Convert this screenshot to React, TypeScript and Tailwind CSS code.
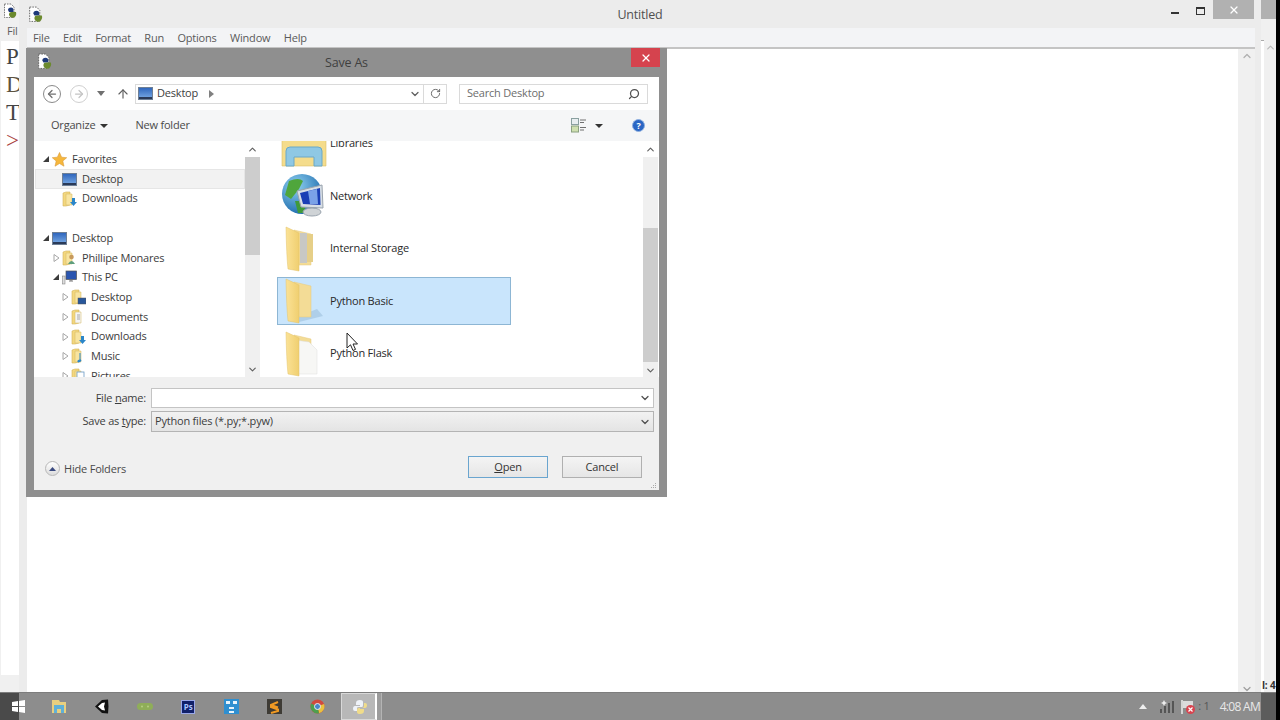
import { ArrowLeft, ArrowRight, ArrowUp, ChevronDown, ChevronUp, RotateCw, Search, X } from 'lucide-react';

const uiFont = "[font-family:'Open_Sans','Noto_Sans',sans-serif] tracking-[-0.2px]";

const Tri = ({ open }: { open: boolean }) => (
  <svg width="10" height="10" viewBox="0 0 10 10" className="shrink-0">
    {open ? <path d="M2 8 L8 8 L8 2 Z" fill="#3c3c3c" /> : <path d="M3 1.5 L8 5 L3 8.5 Z" fill="#fff" stroke="#a6a6a6" />}
  </svg>
);

const PyDoc = ({ size = 16 }: { size?: number }) => (
  <svg width={size} height={size} viewBox="0 0 16 16" className="shrink-0">
    <path d="M2.5 1 H9 L12 4 V14.5 H2.5 Z" fill="#fff" stroke="#555" strokeDasharray="1.5 1" strokeWidth="0.8" />
    <path d="M6 7 Q6 4.5 9 4.5 Q11.5 4.5 11.5 7 V9 H7 Z" fill="#1f3a7a" />
    <path d="M7 11 Q7 9 9.5 9 H14 Q15 12.5 12 14.5 Q8 15.5 7 12 Z" fill="#6c8a2e" />
  </svg>
);

const SmallFolder = ({ kind }: { kind: string }) => (
  <svg width="15" height="16" viewBox="0 0 15 16" className="shrink-0">
    <path d="M1 2 L4 1 H8 V14 L4 15 H1 Z" fill="#f3d77f" stroke="#d3b45c" strokeWidth="0.6" />
    <path d="M4 3 H10 V14 H4 Z" fill={kind === 'doc' ? '#f5f5f5' : '#f8e4a0'} stroke="#d3b45c" strokeWidth="0.5" />
    {kind === 'down' && <path d="M10 7 H13 V11 H15 L11.5 15 L8 11 H10 Z" fill="#2b86c9" />}
    {kind === 'desk' && <rect x="7" y="9" width="8" height="6" fill="#28579b" stroke="#555" strokeWidth="0.5" />}
    {kind === 'doc' && <path d="M6 6 H9 M6 8 H9 M6 10 H9" stroke="#888" strokeWidth="0.7" />}
    {kind === 'music' && <path d="M9 5 V12 M9 12 Q6 12 7 14 Q10 14 10 12 Z" stroke="#2b86c9" fill="#2b86c9" />}
    {kind === 'user' && <><circle cx="9.5" cy="7" r="2.3" fill="#c79a5c" /><path d="M6 14 Q9.5 8 13 14 Z" fill="#5e9e7d" /></>}
    {kind === 'pic' && <rect x="6" y="4" width="7" height="9" fill="#fff" stroke="#6a9ac4" strokeWidth="0.8" />}
  </svg>
);

const Monitor = () => (
  <svg width="15" height="13" viewBox="0 0 15 13" className="shrink-0">
    <defs>
      <linearGradient id="deskGrad" x1="0" y1="0" x2="0" y2="1">
        <stop offset="0" stopColor="#2c63bb" />
        <stop offset="1" stopColor="#7fb0e8" />
      </linearGradient>
    </defs>
    <rect x="0.5" y="0.5" width="14" height="12" fill="url(#deskGrad)" stroke="#6e7f95" />
    <rect x="1" y="10" width="13" height="2" fill="#2a3a58" />
  </svg>
);

const Star = () => (
  <svg width="15" height="15" viewBox="0 0 15 15" className="shrink-0">
    <path d="M7.5 0.5 L9.6 5.2 L14.7 5.7 L10.8 9 L12 14.2 L7.5 11.5 L3 14.2 L4.2 9 L0.3 5.7 L5.4 5.2 Z" fill="#f6b73c" stroke="#d99a3a" strokeWidth="0.6" />
  </svg>
);

const PcIcon = () => (
  <svg width="15" height="15" viewBox="0 0 15 15" className="shrink-0">
    <rect x="0.5" y="6" width="2.5" height="8" fill="#ddd" stroke="#777" strokeWidth="0.5" />
    <rect x="4" y="1" width="10.5" height="8.5" fill="#2a55b0" stroke="#555" strokeWidth="0.7" />
    <path d="M7 11 H11 M9 9.5 V11" stroke="#777" />
  </svg>
);

const LargeFolder = ({ kind }: { kind: string }) => (
  <svg width="46" height="48" viewBox="0 0 46 48" className="shrink-0">
    <defs>
      <linearGradient id={`fold-${kind}`} x1="0" y1="0" x2="1" y2="0">
        <stop offset="0" stopColor="#fbe296" />
        <stop offset="1" stopColor="#f0cf70" />
      </linearGradient>
    </defs>
    {kind === 'basic' && <path d="M16 40 L36 32 L42 39 L18 45 Z" fill="#a9c9e4" opacity="0.8" />}
    <path d="M13 5 L30 9 V40 H13 Z" fill="#f3dc96" stroke="#e6cb7e" strokeWidth="0.5" />
    {kind === 'storage' && <path d="M19 8 H26 V38 H19 Z" fill="#c8c8c4" />}
    {kind === 'storage' && <path d="M26 9 H32 V37 H26 Z" fill="#e6cf88" />}
    {kind === 'flask' && <path d="M14 10 L28 12 L36 20 V44 H14 Z" fill="#f7f7f5" stroke="#ddd" strokeWidth="0.5" />}
    <path d="M5 2 L18 8 V46 L7 44 Q5.5 30 5 2 Z" fill={`url(#fold-${kind})`} stroke="#e2c26a" strokeWidth="0.5" />
  </svg>
);

const LibraryIcon = () => (
  <svg width="46" height="48" viewBox="0 0 46 48" className="shrink-0">
    <path d="M1 6 H45 V46 H1 Z" fill="#f4dc8c" stroke="#dcc06a" strokeWidth="0.6" />
    <path d="M5 31 Q5 27 9 27 H37 Q41 27 41 31 V46 H33 V37 H13 V46 H5 Z" fill="#8fc8e4" stroke="#6aa8c8" />
  </svg>
);

const NetworkIcon = () => (
  <svg width="46" height="46" viewBox="0 0 46 46" className="shrink-0">
    <defs>
      <radialGradient id="globeGrad" cx="0.35" cy="0.3" r="0.8">
        <stop offset="0" stopColor="#8fd0f0" />
        <stop offset="1" stopColor="#1463a8" />
      </radialGradient>
    </defs>
    <circle cx="21" cy="21" r="20" fill="url(#globeGrad)" />
    <path d="M8 8 Q18 4 22 8 L18 16 L10 26 L4 22 Z" fill="#4fa63c" />
    <path d="M14 28 L24 28 L24 40 L17 40 Z" fill="#3f9a3a" />
    <path d="M16 18 L41 12 L42 35 L20 34 Z" fill="#d8dfe6" stroke="#9aa4ae" />
    <path d="M19 20 L39 15 L39.5 32 L22 31 Z" fill="#1a3fb5" />
    <path d="M27 18 L36 16 L37 31 L29 31 Z" fill="#7aa2e8" />
    <ellipse cx="31" cy="39" rx="9" ry="4" fill="#cfd3d6" stroke="#9aa4ae" />
  </svg>
);

const Cursor = () => (
  <svg width="13" height="20" viewBox="0 0 13 20">
    <path d="M1 1 V16 L4.5 12.8 L7 18.5 L9.5 17.4 L7 12 L11.5 12 Z" fill="#fff" stroke="#222" strokeWidth="1" />
  </svg>
);

const treeIndent = ['pl-[6px]', 'pl-[16px]', 'pl-[25px]'];

const TreeRow = ({ level, arrow, icon, label, active }: { level: number; arrow?: 'open' | 'closed'; icon: React.ReactNode; label: string; active?: boolean }) => (
  <div className={`flex items-center h-[19.7px] shrink-0 ${treeIndent[level]} ${active ? 'bg-[#f2f2f2] outline outline-1 -outline-offset-1 outline-[#e6e6e6]' : ''}`}>
    <span className="w-[10px] mr-[1px] shrink-0">{arrow && <Tri open={arrow === 'open'} />}</span>
    <span className="w-[15px] mr-[5px] shrink-0 flex justify-center">{icon}</span>
    <span className="text-[11px] text-[#3c3c3c] whitespace-nowrap">{label}</span>
  </div>
);

const FileItem = ({ icon, label, selected }: { icon: React.ReactNode; label: string; selected?: boolean }) => (
  <div className={`flex items-center w-[234px] h-[48px] shrink-0 pl-[3px] border ${selected ? 'bg-[#c9e5fc] border-[#8db6d4]' : 'border-transparent'}`}>
    <span className="w-[46px] mr-[3px] flex justify-center shrink-0">{icon}</span>
    <span className="text-[11px] text-[#2a2a2a] whitespace-nowrap">{label}</span>
  </div>
);

const VScroll = ({ thumbTop, thumbHeight }: { thumbTop: string; thumbHeight: string }) => (
  <div className="w-[15px] shrink-0 bg-[#f0f0f0] flex flex-col h-full">
    <div className="h-[16px] flex items-center justify-center shrink-0 bg-white">
      <ChevronUp size={11} strokeWidth={2.5} className="text-[#606060]" />
    </div>
    <div className="flex-1 flex flex-col">
      <div className={thumbTop} />
      <div className={`${thumbHeight} bg-[#cdcdcd]`} />
    </div>
    <div className="h-[16px] flex items-center justify-center shrink-0">
      <ChevronDown size={11} strokeWidth={2.5} className="text-[#606060]" />
    </div>
  </div>
);

const SaveAsDialog = () => (
  <div className={`absolute left-[26px] top-[48px] w-[641px] h-[449px] bg-[#8f8f8f] flex flex-col ${uiFont}`}>
    <div className="h-[29px] shrink-0 relative flex items-center justify-center">
      <span className="absolute left-[10px] top-[5px]"><PyDoc size={17} /></span>
      <span className="text-[12.5px] text-[#3f3f3f] translate-y-[1px]">Save As</span>
      <div className="absolute right-[7px] top-0 w-[29px] h-[19px] bg-[#d5434e] flex items-center justify-center">
        <X size={12} strokeWidth={2.5} className="text-white" />
      </div>
    </div>
    <div className="flex-1 ml-[8px] mr-[8px] mb-[7px] bg-[#f0f0f0] flex flex-col min-h-0">
      {/* nav bar */}
      <div className="h-[33px] shrink-0 bg-white flex items-center pl-[9px]">
        <span className="w-[18px] h-[18px] rounded-full border border-[#8a8a8a] flex items-center justify-center">
          <ArrowLeft size={12} strokeWidth={2.5} className="text-[#707070]" />
        </span>
        <span className="ml-[9px] w-[18px] h-[18px] rounded-full border border-[#d0d0d0] flex items-center justify-center">
          <ArrowRight size={12} strokeWidth={2.5} className="text-[#c4c4c4]" />
        </span>
        <svg width="8" height="5" viewBox="0 0 8 5" className="ml-[9px]"><path d="M0 0 H8 L4 5 Z" fill="#707070" /></svg>
        <ArrowUp size={14} strokeWidth={2} className="ml-[11px] text-[#606060]" />
        <div className="ml-[5px] w-[312px] h-[20px] border border-[#dadada] flex items-center">
          <span className="ml-[2px]"><Monitor /></span>
          <span className="ml-[4px] text-[11px] text-[#404040]">Desktop</span>
          <svg width="5" height="8" viewBox="0 0 5 8" className="ml-[11px]"><path d="M0 0 L5 4 L0 8 Z" fill="#808080" /></svg>
          <span className="ml-auto flex items-center h-full">
            <ChevronDown size={12} strokeWidth={2.5} className="text-[#606060] mr-[2px]" />
            <span className="w-[23px] h-full border-l border-[#dadada] flex items-center justify-center">
              <RotateCw size={11} strokeWidth={2} className="text-[#606060]" />
            </span>
          </span>
        </div>
        <div className="ml-[12px] w-[189px] h-[20px] border border-[#dadada] flex items-center justify-between px-[7px]">
          <span className="text-[11px] text-[#6d6d6d]">Search Desktop</span>
          <Search size={12} strokeWidth={2.5} className="text-[#505050] -scale-x-100" />
        </div>
      </div>
      {/* toolbar */}
      <div className="h-[31px] shrink-0 bg-[#f5f6f7] flex items-center pl-[17px] pr-[14px]">
        <span className="text-[11px] text-[#4a4a4a]">Organize</span>
        <svg width="8" height="4" viewBox="0 0 8 4" className="ml-[5px]"><path d="M0 0 H8 L4 4 Z" fill="#333" /></svg>
        <span className="ml-[27px] text-[11px] text-[#4a4a4a]">New folder</span>
        <span className="ml-auto flex items-center">
          <svg width="16" height="15" viewBox="0 0 16 15">
            <rect x="0.5" y="0.5" width="7" height="6" fill="#e8eef0" stroke="#8aa0a0" />
            <rect x="0.5" y="8" width="7" height="6" fill="#cfe0b0" stroke="#8aa080" />
            <path d="M9 2 H15 M9 4.5 H13 M9 9.5 H15 M9 12 H13" stroke="#707070" />
          </svg>
          <svg width="8" height="4" viewBox="0 0 8 4" className="ml-[8px]"><path d="M0 0 H8 L4 4 Z" fill="#333" /></svg>
          <span className="ml-[29px] w-[13px] h-[13px] rounded-full bg-[#2a66c4] border border-[#8fb0e0] text-white text-[9px] font-bold flex items-center justify-center leading-none">?</span>
        </span>
      </div>
      {/* panes */}
      <div className="h-[236px] shrink-0 bg-white flex">
        <div className="w-[211px] shrink-0 overflow-hidden flex flex-col pt-[8.5px] pl-[1px]">
          <TreeRow level={0} arrow="open" icon={<Star />} label="Favorites" />
          <TreeRow level={1} icon={<Monitor />} label="Desktop" active />
          <TreeRow level={1} icon={<SmallFolder kind="down" />} label="Downloads" />
          <div className="h-[19.7px] shrink-0" />
          <TreeRow level={0} arrow="open" icon={<Monitor />} label="Desktop" />
          <TreeRow level={1} arrow="closed" icon={<SmallFolder kind="user" />} label="Phillipe Monares" />
          <TreeRow level={1} arrow="open" icon={<PcIcon />} label="This PC" />
          <TreeRow level={2} arrow="closed" icon={<SmallFolder kind="desk" />} label="Desktop" />
          <TreeRow level={2} arrow="closed" icon={<SmallFolder kind="doc" />} label="Documents" />
          <TreeRow level={2} arrow="closed" icon={<SmallFolder kind="down" />} label="Downloads" />
          <TreeRow level={2} arrow="closed" icon={<SmallFolder kind="music" />} label="Music" />
          <TreeRow level={2} arrow="closed" icon={<SmallFolder kind="pic" />} label="Pictures" />
        </div>
        <VScroll thumbTop="h-0" thumbHeight="h-[98px]" />
        <div className="w-[2px] shrink-0" />
        <div className="flex-1 overflow-hidden pl-[15px] flex flex-col gap-[4.5px]">
          <div className="-mt-[21.5px]"><FileItem icon={<LibraryIcon />} label="Libraries" /></div>
          <FileItem icon={<NetworkIcon />} label="Network" />
          <FileItem icon={<LargeFolder kind="storage" />} label="Internal Storage" />
          <FileItem icon={<LargeFolder kind="basic" />} label="Python Basic" selected />
          <FileItem icon={<LargeFolder kind="flask" />} label="Python Flask" />
        </div>
        <VScroll thumbTop="h-[71px]" thumbHeight="h-[134px]" />
        <div className="w-[1px] shrink-0" />
      </div>
      {/* file name and type */}
      <div className="flex-1 flex flex-col pt-[11px] pr-[5px] relative">
        <div className="flex items-center h-[20px]">
          <span className="w-[112px] text-right text-[11px] text-[#3c3c3c]">File <u>n</u>ame:</span>
          <div className="ml-[5px] flex-1 h-full bg-white border border-[#c4c4c4] flex items-center justify-end pr-[2px]">
            <ChevronDown size={12} strokeWidth={2.5} className="text-[#505050]" />
          </div>
        </div>
        <div className="flex items-center h-[21px] mt-[3px]">
          <span className="w-[112px] text-right text-[11px] text-[#3c3c3c]">Save as <u>t</u>ype:</span>
          <div className="ml-[5px] flex-1 h-full bg-gradient-to-b from-[#f2f2f2] to-[#e4e4e4] border border-[#b4b4b4] flex items-center justify-between pl-[3px] pr-[2px]">
            <span className="text-[11px] text-[#3c3c3c]">Python files (*.py;*.pyw)</span>
            <ChevronDown size={12} strokeWidth={2.5} className="text-[#505050]" />
          </div>
        </div>
        <div className="flex items-center mt-[24px] pl-[11px] pr-[12px]">
          <span className="mt-[3px] w-[15px] h-[15px] rounded-full border border-[#b8b8b8] bg-gradient-to-b from-white to-[#dcdcdc] flex items-center justify-center">
            <svg width="7" height="4" viewBox="0 0 7 4"><path d="M0 4 L3.5 0 L7 4 Z" fill="#3a4a80" /></svg>
          </span>
          <span className="mt-[4px] ml-[4px] text-[11px] text-[#4a4a4a]">Hide Folders</span>
          <div className="ml-auto w-[80px] h-[22px] border border-[#6aa5cf] bg-gradient-to-b from-[#f4f4f4] to-[#e6e6e6] flex items-center justify-center text-[11px] text-[#333]">
            <span><u>O</u>pen</span>
          </div>
          <div className="ml-[14px] w-[80px] h-[22px] border border-[#b0b0b0] bg-gradient-to-b from-[#f4f4f4] to-[#e6e6e6] flex items-center justify-center text-[11px] text-[#333]">
            Cancel
          </div>
        </div>
        <svg width="7" height="7" viewBox="0 0 7 7" className="absolute right-[2px] bottom-[1px]">
          <path d="M5 1 h1 v1 h-1z M3 3 h1 v1 h-1z M5 3 h1 v1 h-1z M1 5 h1 v1 h-1z M3 5 h1 v1 h-1z M5 5 h1 v1 h-1z" fill="#a8a8a8" />
        </svg>
      </div>
    </div>
  </div>
);

const TrayIcon = ({ children }: { children: React.ReactNode }) => (
  <span className="w-[43.2px] flex justify-center shrink-0">{children}</span>
);

const Taskbar = () => (
  <div className={`h-[28px] shrink-0 flex items-center border-t border-[#7d7d7d] bg-[linear-gradient(90deg,#4a4a4a_19px,#8d8d8d_19px,#8d8d8d_1261px,#5c5c5c_1261px)] ${uiFont}`}>
    <svg width="13" height="13" viewBox="0 0 13 13" className="ml-[12px] shrink-0">
      <path d="M0 2 L6 1 V6 H0 Z M7 1 L13 0 V6 H7 Z M0 7 H6 V12 L0 11 Z M7 7 H13 V13 L7 12 Z" fill="#fff" />
    </svg>
    <div className="ml-[12px] flex items-center">
      <TrayIcon>
        <svg width="16" height="15" viewBox="0 0 16 15">
          <path d="M1 1 H8 L9 3 H15 V14 H1 Z" fill="#e8cf7f" />
          <path d="M3 6 H13 V14 H10 V10 H6 V14 H3 Z" fill="#5fb0d8" />
        </svg>
      </TrayIcon>
      <TrayIcon>
        <svg width="15" height="15" viewBox="0 0 15 15">
          <path d="M1 7.5 L8 1 L14 0.5 L14.5 7.5 L14 14.5 L8 14 Z" fill="#111" />
          <path d="M4 7.5 L8 4 L11 3.5 L10 7.5 L11 11.5 L8 11 Z" fill="#fff" />
        </svg>
      </TrayIcon>
      <TrayIcon>
        <svg width="16" height="9" viewBox="0 0 16 9">
          <rect x="0" y="1" width="16" height="7" rx="3.5" fill="#8fae58" />
          <circle cx="5" cy="4.5" r="1" fill="#b6cf82" />
          <circle cx="11" cy="4.5" r="1" fill="#b6cf82" />
        </svg>
      </TrayIcon>
      <TrayIcon>
        <span className="w-[14px] h-[14px] bg-[#10206a] border border-[#9aa8e8] text-[#a9c4ff] text-[8px] font-bold flex items-center justify-center leading-none">Ps</span>
      </TrayIcon>
      <TrayIcon>
        <svg width="15" height="15" viewBox="0 0 15 15">
          <rect width="15" height="15" fill="#2f8fd0" />
          <path d="M2 2 H6 V5 H2 Z M9 2 H13 V5 H9 Z M5 8 H10 V10 H5 Z M5 12 H10 V14 H5 Z" fill="#e8f4fc" />
        </svg>
      </TrayIcon>
      <TrayIcon>
        <svg width="15" height="15" viewBox="0 0 15 15">
          <rect width="15" height="15" fill="#3e3b35" />
          <path d="M11 3 L4 6 V8 L11 10.5 V12 L4 14 M4 6 L11 8.5" stroke="#f09a24" strokeWidth="2" fill="none" />
        </svg>
      </TrayIcon>
      <TrayIcon>
        <svg width="15" height="15" viewBox="0 0 15 15">
          <circle cx="7.5" cy="7.5" r="7" fill="#d24a3e" />
          <path d="M7.5 7.5 L14 5 A7 7 0 0 1 9 14.3 Z" fill="#e9c23e" />
          <path d="M7.5 7.5 L9 14.3 A7 7 0 0 1 1.2 4.5 Z" fill="#4e9f4e" />
          <circle cx="7.5" cy="7.5" r="3" fill="#4a86c8" stroke="#eee" />
        </svg>
      </TrayIcon>
      <span className="ml-[2px] w-[36px] h-[27px] bg-[#b8b8b8] border border-[#d8d8d8] border-r-2 border-r-white flex items-center justify-center shrink-0">
        <svg width="16" height="16" viewBox="0 0 16 16" className="translate-x-[1px]">
          <path d="M8 1 Q4 1 4 4 V6 H8 V7 H3 Q1 7 1 10 Q1 12 3 12 H5 V9 Q5 8 7 8 H10 Q11 8 11 6 V3 Q11 1 8 1 Z" fill="#eef2f8" />
          <path d="M8 15 Q12 15 12 12 V10 H8 V9 H13 Q15 9 15 6 Q15 4 13 4 H12 V7 Q12 9 10 9 H7 Q5 9 5 11 V13 Q5 15 8 15 Z" fill="#f0dc8a" />
        </svg>
      </span>
      <span className="w-[5px] h-[27px] bg-[#9c9c9c] border-r border-[#b4b4b4] shrink-0" />
    </div>
    <div className="ml-auto flex items-center pr-[16px]">
      <svg width="8" height="5" viewBox="0 0 8 5" className="mr-[11.5px]"><path d="M0 5 L4 0 L8 5 Z" fill="#eeeeee" /></svg>
      <svg width="15" height="13" viewBox="0 0 15 13" className="mr-[6.5px]">
        <path d="M1 9 h2 v4 h-2z M5 6 h2 v7 h-2z M9 3 h2 v10 h-2z M13 1 h2 v12 h-2z" fill="#555" />
        <path d="M5 0 L6 2 L8 3 L6 4 L5 6 L4 4 L2 3 L4 2 Z" fill="#eee" />
      </svg>
      <svg width="16" height="16" viewBox="0 0 16 16" className="mr-[2px]">
        <path d="M2 1 V15" stroke="#eee" strokeWidth="1.5" />
        <path d="M3 2 H13 V9 H3 Z" fill="#dcdcdc" />
        <circle cx="10.5" cy="10.5" r="4.5" fill="#d9434e" />
        <path d="M8.5 8.5 L12.5 12.5 M12.5 8.5 L8.5 12.5" stroke="#fff" strokeWidth="1.2" />
      </svg>
      <span className="text-[11px] text-[#555] mr-[10px] whitespace-nowrap">: 1</span>
      <span className="text-[12px] text-[#e8e8e8] whitespace-nowrap tracking-[-0.7px]">4:08 AM</span>
    </div>
  </div>
);

export default function App() {
  return (
    <div className="relative w-[1280px] h-[720px] overflow-hidden flex bg-black">
      <div className="flex-1 flex flex-col min-w-0">
        <div className="flex-1 flex min-h-0">
          {/* window behind, left */}
          <div className="w-[19px] shrink-0 bg-[#f0f0f0] flex flex-col overflow-hidden">
            <div className="h-[21px] shrink-0 pl-[2px] pt-[3px]"><PyDoc size={16} /></div>
            <div className={`h-[20px] shrink-0 pl-[7px] text-[11px] leading-[20px] text-[#606060] ${uiFont}`}>Fil</div>
            <div className="h-[634px] ml-[1px] bg-white flex flex-col pl-[5px] pt-[2px] [font-family:'Liberation_Serif',serif] text-[23px] leading-[28px]">
              <span className="text-[#444]">P</span>
              <span className="text-[#5c5240]">D</span>
              <span className="text-[#444]">T</span>
              <span className="text-[#a84040]">&gt;</span>
            </div>
          </div>
          {/* main editor window */}
          <div className="flex-1 flex flex-col bg-[#ececec] min-w-0">
            <div className="h-[28px] shrink-0 relative flex items-center">
              <span className="ml-[8px]"><PyDoc size={17} /></span>
              <span className={`absolute left-[621px] -translate-x-1/2 translate-y-[1px] text-[12.5px] text-[#505050] ${uiFont}`}>Untitled</span>
              <span className="absolute left-[1152px] top-[12px] w-[8px] h-[2px] bg-[#333]" />
              <span className="absolute left-[1177px] top-[7px] w-[9px] h-[8px] border border-t-2 border-[#333]" />
              <div className="absolute left-[1194px] top-0 w-[41px] h-[19px] bg-[#b1b1b1] flex items-center justify-center">
                <X size={12} strokeWidth={2.5} className="text-white" />
              </div>
            </div>
            <div className="flex-1 flex min-h-0 pl-[8px] pr-[6px]">
              <div className="flex-1 flex flex-col min-w-0">
                <div className={`h-[19px] shrink-0 bg-[#f3f4f6] flex items-center gap-[13.4px] pl-[6px] pt-[1px] text-[11px] text-[#5a5a5a] ${uiFont}`}>
                  <span>File</span>
                  <span>Edit</span>
                  <span>Format</span>
                  <span>Run</span>
                  <span>Options</span>
                  <span>Window</span>
                  <span>Help</span>
                </div>
                <div className="flex-1 flex min-h-0 border-t-2 border-[#c4c4c4]">
                  <div className="flex-1 bg-white" />
                  <div className="w-[17px] shrink-0 bg-[#f0f0f0] flex flex-col items-center justify-between">
                    <ChevronUp size={12} strokeWidth={2.5} className="text-[#b0b0b0] mt-[1px]" />
                    <ChevronDown size={12} strokeWidth={2.5} className="text-[#a0a0a0] translate-y-[3px]" />
                  </div>
                </div>
              </div>
            </div>
          </div>
          {/* window behind, right */}
          <div className="w-[15px] shrink-0 bg-[#f0f0f0] flex flex-col overflow-hidden">
            <div className="h-[19px] shrink-0 bg-[#b1b1b1]" />
            <div className="h-[21px] shrink-0" />
            <div className="flex-1 flex">
              <div className="w-[3px] bg-white border-t border-[#aaa]" />
              <div className="flex-1 flex flex-col items-center">
                <ChevronUp size={11} strokeWidth={2.5} className="text-[#b8b8b8] mt-[2px]" />
              </div>
            </div>
            <div className={`absolute left-[1262px] top-[677px] text-[10px] text-[#333] font-bold leading-[16px] ${uiFont}`}>l: 4</div>
          </div>
        </div>
        <Taskbar />
      </div>
      <div className="w-[4px] shrink-0 bg-black" />
      <SaveAsDialog />
      <div className="absolute left-[346px] top-[332px]"><Cursor /></div>
    </div>
  );
}
